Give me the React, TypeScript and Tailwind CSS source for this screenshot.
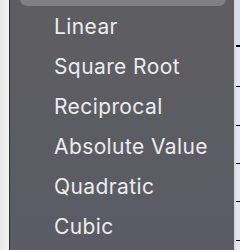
const items = ['Linear', 'Square Root', 'Reciprocal', 'Absolute Value', 'Quadratic', 'Cubic']

export default function App() {
  return (
    <div className="flex h-[250px] w-[240px] overflow-hidden bg-[#efefef]">
      <div className="w-[9px] shrink-0 bg-gradient-to-r from-[#e8e8e8] to-[#f3f3f3]" />
      {/* popup menu */}
      <div className="w-[225px] shrink-0 border-l border-[#2e2e30] bg-gradient-to-b from-[#5e5e61] to-[#5a5b65] pl-[10px] pr-[8px]">
        <div className="mt-[-28px] flex flex-col gap-[6px]">
          <div className="h-[34px] rounded-[7px] bg-[#807f81]" />
          {items.map((label) => (
            <div
              key={label}
              className="flex h-[34px] items-center rounded-[7px] pl-[34px] pb-[5px] text-[21px] font-normal tracking-[0.4px] text-[#ececee] font-['Inter',sans-serif]"
            >
              {label}
            </div>
          ))}
        </div>
      </div>
      {/* table behind */}
      <div className="flex w-[6px] shrink-0">
        <div className="w-[2px] bg-[#d9d9dc]" />
        <div className="flex flex-1 flex-col bg-[#e6e6f2]">
          <div className="h-[47px] border-b-2 border-black bg-[#d6e0e6]" />
          <div className="h-[40px] border-b border-black" />
          <div className="h-[39px] border-b border-black" />
          <div className="h-[38px] border-b border-black" />
          <div className="h-[38px] border-b border-black" />
          <div className="h-[39px] border-b border-black" />
        </div>
      </div>
    </div>
  )
}
